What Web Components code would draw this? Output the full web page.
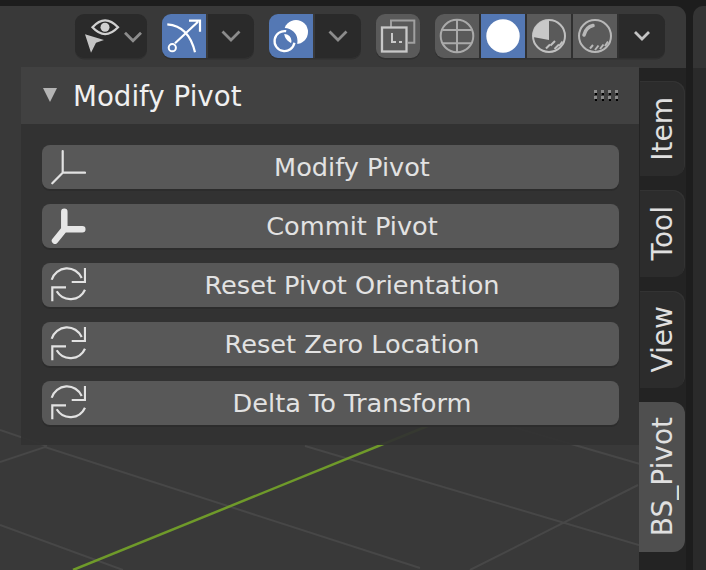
<!DOCTYPE html>
<html><head><meta charset="utf-8"><style>
html,body{margin:0;padding:0;background:#1d1d1d}
body{width:706px;height:570px;overflow:hidden;font-family:"DejaVu Sans",sans-serif}
</style></head><body>
<b-app></b-app>
<template id="app"><style>
:host{display:grid;grid-template-columns:686px 13px;column-gap:7px;height:564px;padding-top:6px;background:#1d1d1d}
.view{position:relative;background:#393939;border-radius:0 11px 0 0;overflow:hidden;display:flex;flex-direction:column}
.bg{position:absolute;left:0;top:-6px;width:706px;height:570px}
.right{background:linear-gradient(#343434 0 62px,#2a2a2a 62px);border-radius:10px 0 0 0}
.main{position:relative;flex:1;display:flex;min-height:0}
.panelwrap{flex:1;padding-left:21px;margin-top:-1px}
b-toolbar{position:relative}
</style>
<div class="view">
<svg class="bg" viewBox="0 0 706 570" fill="none" stroke="#474747" stroke-width="2">
<path d="M0 430L47 446M0 462L45 447L420 568M0 525L123 570M305 446L686 559M420 400L640 464M638 485L470 570"/>
<path d="M73 570L440 421" stroke="#6f9a2a" stroke-width="2.500"/>
</svg>
<b-toolbar></b-toolbar>
<div class="main"><div class="panelwrap"><b-panel title="Modify Pivot">
<b-op label="Modify Pivot"><svg slot="icon" viewBox="0 0 36 36" width="36" height="36" fill="none" stroke="#e2e2e2" stroke-width="2.200" stroke-linecap="round"><path d="M12.700 2V23.700H35M12.700 23.700L2.300 34.300"/></svg></b-op>
<b-op label="Commit Pivot"><svg slot="icon" viewBox="0 0 36 36" width="36" height="36" fill="none" stroke="#e6e6e6" stroke-width="6.500" stroke-linecap="round"><path d="M14.300 3.700V21.300H32.300M14.300 21.300L5 32.700"/></svg></b-op>
<b-op label="Reset Pivot Orientation"><b-reset slot="icon"></b-reset></b-op>
<b-op label="Reset Zero Location"><b-reset slot="icon"></b-reset></b-op>
<b-op label="Delta To Transform"><b-reset slot="icon"></b-reset></b-op>
</b-panel></div>
<b-tabs></b-tabs></div>
</div>
<div class="right"></div>
</template>

<template id="toolbar"><style>
:host{display:flex;height:62px;box-sizing:border-box;padding:8px 0 0 75px;align-items:flex-start}
.g{display:flex;height:44px;border-radius:9px;overflow:hidden;box-shadow:0 1.500px 0 #303030}
.d{background:#2a2a2a;display:flex;align-items:center;justify-content:center}
.a{background:#5478b4;display:flex;align-items:center;justify-content:center}
.m{background:#5a5a5a;display:flex;align-items:center;justify-content:center}
svg{display:block}
</style>
<div class="g d" style="width:72px;margin-right:15px"><svg width="72" height="44" viewBox="75 14 72 44"><path d="M85 34.300L104 40L96 42.700L91 52.700Z" fill="#c4c4c4"/><path d="M92.500 27.300Q105 13.500 118 27.300Q105 41 92.500 27.300Z" fill="none" stroke="#d0d0d0" stroke-width="2.300"/><circle cx="105" cy="27.300" r="4.500" fill="#d0d0d0"/><path d="M125 32.700L133 40.700L141 32.700" fill="none" stroke="#8c8c8c" stroke-width="2.800"/></svg></div>
<div class="g" style="width:92px;margin-right:15px;gap:2px"><div class="a" style="width:44px"><svg width="44" height="44" viewBox="162 14 44 44"><path d="M167.300 24.300Q189 26 195 52.300" fill="none" stroke="#fff" stroke-width="2.200"/><path d="M175 43.300L198 21.700M189 20.700H200V31.700" fill="none" stroke="#fff" stroke-width="2.200"/><circle cx="172.300" cy="47.700" r="3.600" fill="none" stroke="#fff" stroke-width="2"/></svg></div><div class="d" style="flex:1"><svg width="24" height="14" viewBox="0 0 24 14"><path d="M3.500 2.500L12 11L20.500 2.500" fill="none" stroke="#8c8c8c" stroke-width="2.800"/></svg></div></div>
<div class="g" style="width:92px;margin-right:15px;gap:2px"><div class="a" style="width:44px"><svg width="44" height="44" viewBox="269 14 44 44"><circle cx="296" cy="32" r="12" fill="#fff"/><circle cx="284.500" cy="41" r="10" fill="none" stroke="#5478b4" stroke-width="6"/><path d="M286.200 31.200A10 10 0 1 0 294.400 42.700" fill="none" stroke="#fff" stroke-width="2.300"/></svg></div><div class="d" style="flex:1"><svg width="24" height="14" viewBox="0 0 24 14"><path d="M3.500 2.500L12 11L20.500 2.500" fill="none" stroke="#8c8c8c" stroke-width="2.800"/></svg></div></div>
<div class="g m" style="width:44px;margin-right:15px"><svg width="44" height="44" viewBox="376 14 44 44"><path d="M391 27V20.500H414.300V42.700H408" fill="none" stroke="#a0a0a0" stroke-width="2"/><rect x="382" y="27.500" width="24.500" height="24" fill="none" stroke="#c8c8c8" stroke-width="2.300"/><path d="M392 33V42H396M399 42H402" fill="none" stroke="#c8c8c8" stroke-width="2"/></svg></div>
<div class="g" style="width:230px;gap:2px;background:#303030">
<div class="m" style="width:44px"><svg width="44" height="44" viewBox="0 0 44 44"><g fill="none" stroke="#aaa" stroke-width="2"><circle cx="22" cy="22" r="16.300"/><path d="M22 6V38M7.500 16H36.500M7.500 29.300H36.500"/></g></svg></div>
<div class="a" style="width:44px"><svg width="44" height="44" viewBox="0 0 44 44"><circle cx="22" cy="22" r="16.700" fill="#fff"/></svg></div>
<div class="m" style="width:44px"><svg width="44" height="44" viewBox="0 0 44 44"><circle cx="22" cy="22" r="16" fill="none" stroke="#c0c0c0" stroke-width="2"/><path d="M22 6A16 16 0 0 0 6 23L22 26Z" fill="#c8c8c8"/><path d="M23.500 31.500L28 27M27.500 35L32 30.500M32 32L35.500 27.500M19 34.500L23 30.500" stroke="#c0c0c0" stroke-width="2" fill="none"/></svg></div>
<div class="m" style="width:44px"><svg width="44" height="44" viewBox="0 0 44 44"><g fill="none" stroke="#b8b8b8" stroke-width="2"><circle cx="22" cy="22" r="16"/><path d="M11 21Q13 13 20 11.500" stroke-width="3.500" stroke-linecap="round"/><path d="M17 34.500L20 31M22 36L25.500 31.500M27 35L30.500 30.500M32 32L35 27.500"/></g></svg></div>
<div class="d" style="flex:1;"><svg width="24" height="14" viewBox="0 0 24 14"><path d="M5 3L12 10L19 3" fill="none" stroke="#c4c4c4" stroke-width="2.800"/></svg></div>
</div>
</template>

<template id="panel"><style>
:host{display:block;width:618px;height:378px;background:rgba(50,50,50,.93)}
header{display:flex;align-items:center;height:57px;background:#414141;color:#f0f0f0;font-size:27.700px;padding:2px 0 0 22px;box-sizing:border-box}
.tri{width:0;height:0;border:7.500px solid transparent;border-top:14px solid #b4b4b4;border-bottom:0;margin:-3px 16px 0 0}
.t{flex:1}
.grip{width:25px;height:12px;margin:-2px 20px 0 0;background:
 repeating-linear-gradient(90deg,#8a8a8a 0 3px,transparent 3px 7px) 0 0/25px 3px no-repeat,
 repeating-linear-gradient(90deg,transparent 0 1px,#000 1px 3px,transparent 3px 7px) 0 3px/25px 2px no-repeat,
 repeating-linear-gradient(90deg,#8a8a8a 0 3px,transparent 3px 7px) 0 6px/25px 3px no-repeat,
 repeating-linear-gradient(90deg,transparent 0 1px,#000 1px 3px,transparent 3px 7px) 0 9px/25px 2px no-repeat}
.body{display:flex;flex-direction:column;gap:15px;padding:21px 20px 0 21px}
</style><header><span class="tri"></span><span class="t"></span><span class="grip"></span></header><div class="body"><slot></slot></div></template>

<template id="op"><style>
:host{display:block}
button{position:relative;display:flex;box-sizing:border-box;width:100%;height:44px;align-items:center;justify-content:center;padding:0 0 0 43px;border:0;border-radius:8px;background:#585858;box-shadow:0 2px 0 #2c2c2c;color:#e2e2e2;font:25.600px "DejaVu Sans",sans-serif}
.i{position:absolute;left:8px;top:4px;width:36px;height:36px}
</style><button><span class="i"><slot name="icon"></slot></span><span class="l"></span></button></template>

<template id="reset"><style>:host{display:block;width:36px;height:36px}svg{display:block}</style><svg width="36" height="36" viewBox="0 0 36 36" fill="none" stroke="#e2e2e2" stroke-width="2.200"><path d="M1.700 12.700A16 16 0 0 1 31.700 11"/><path d="M35 1V15H21.700"/><path d="M35 22.700A16 16 0 0 1 6.700 24.300"/><path d="M2.300 34.300V20.300H16"/></svg></template>

<template id="tabs"><style>
:host{display:flex;flex-direction:column;width:47px;background:#232323;padding-top:13px;box-sizing:border-box;gap:14px;overflow:hidden}
.tab{width:45px;margin-left:1px;display:flex;align-items:center;justify-content:center;background:#2c2c2c;border-radius:0 12px 12px 0;color:#e0e0e0;font-size:28px;box-shadow:inset -1px 1px 0 #333}
.tab span{writing-mode:vertical-rl;transform:rotate(180deg)}
.on{background:#4f4f4f;margin-left:0;width:46px;box-shadow:none}
</style>
<div class="tab" style="height:95px"><span>Item</span></div>
<div class="tab" style="height:87px"><span>Tool</span></div>
<div class="tab" style="height:97px"><span>View</span></div>
<div class="tab on" style="height:150px"><span>BS_Pivot</span></div>
</template>

<script>
function reg(name,tpl,init){customElements.define(name,class extends HTMLElement{connectedCallback(){if(this.shadowRoot)return;const s=this.attachShadow({mode:'open'});s.appendChild(document.getElementById(tpl).content.cloneNode(true));if(init)init(this,s);}});}
reg('b-toolbar','toolbar');
reg('b-panel','panel',(h,s)=>{s.querySelector('.t').textContent=h.getAttribute('title');h.removeAttribute('title');});
reg('b-op','op',(h,s)=>{s.querySelector('.l').textContent=h.getAttribute('label');});
reg('b-reset','reset');
reg('b-tabs','tabs');
reg('b-app','app');
</script>
</body></html>
